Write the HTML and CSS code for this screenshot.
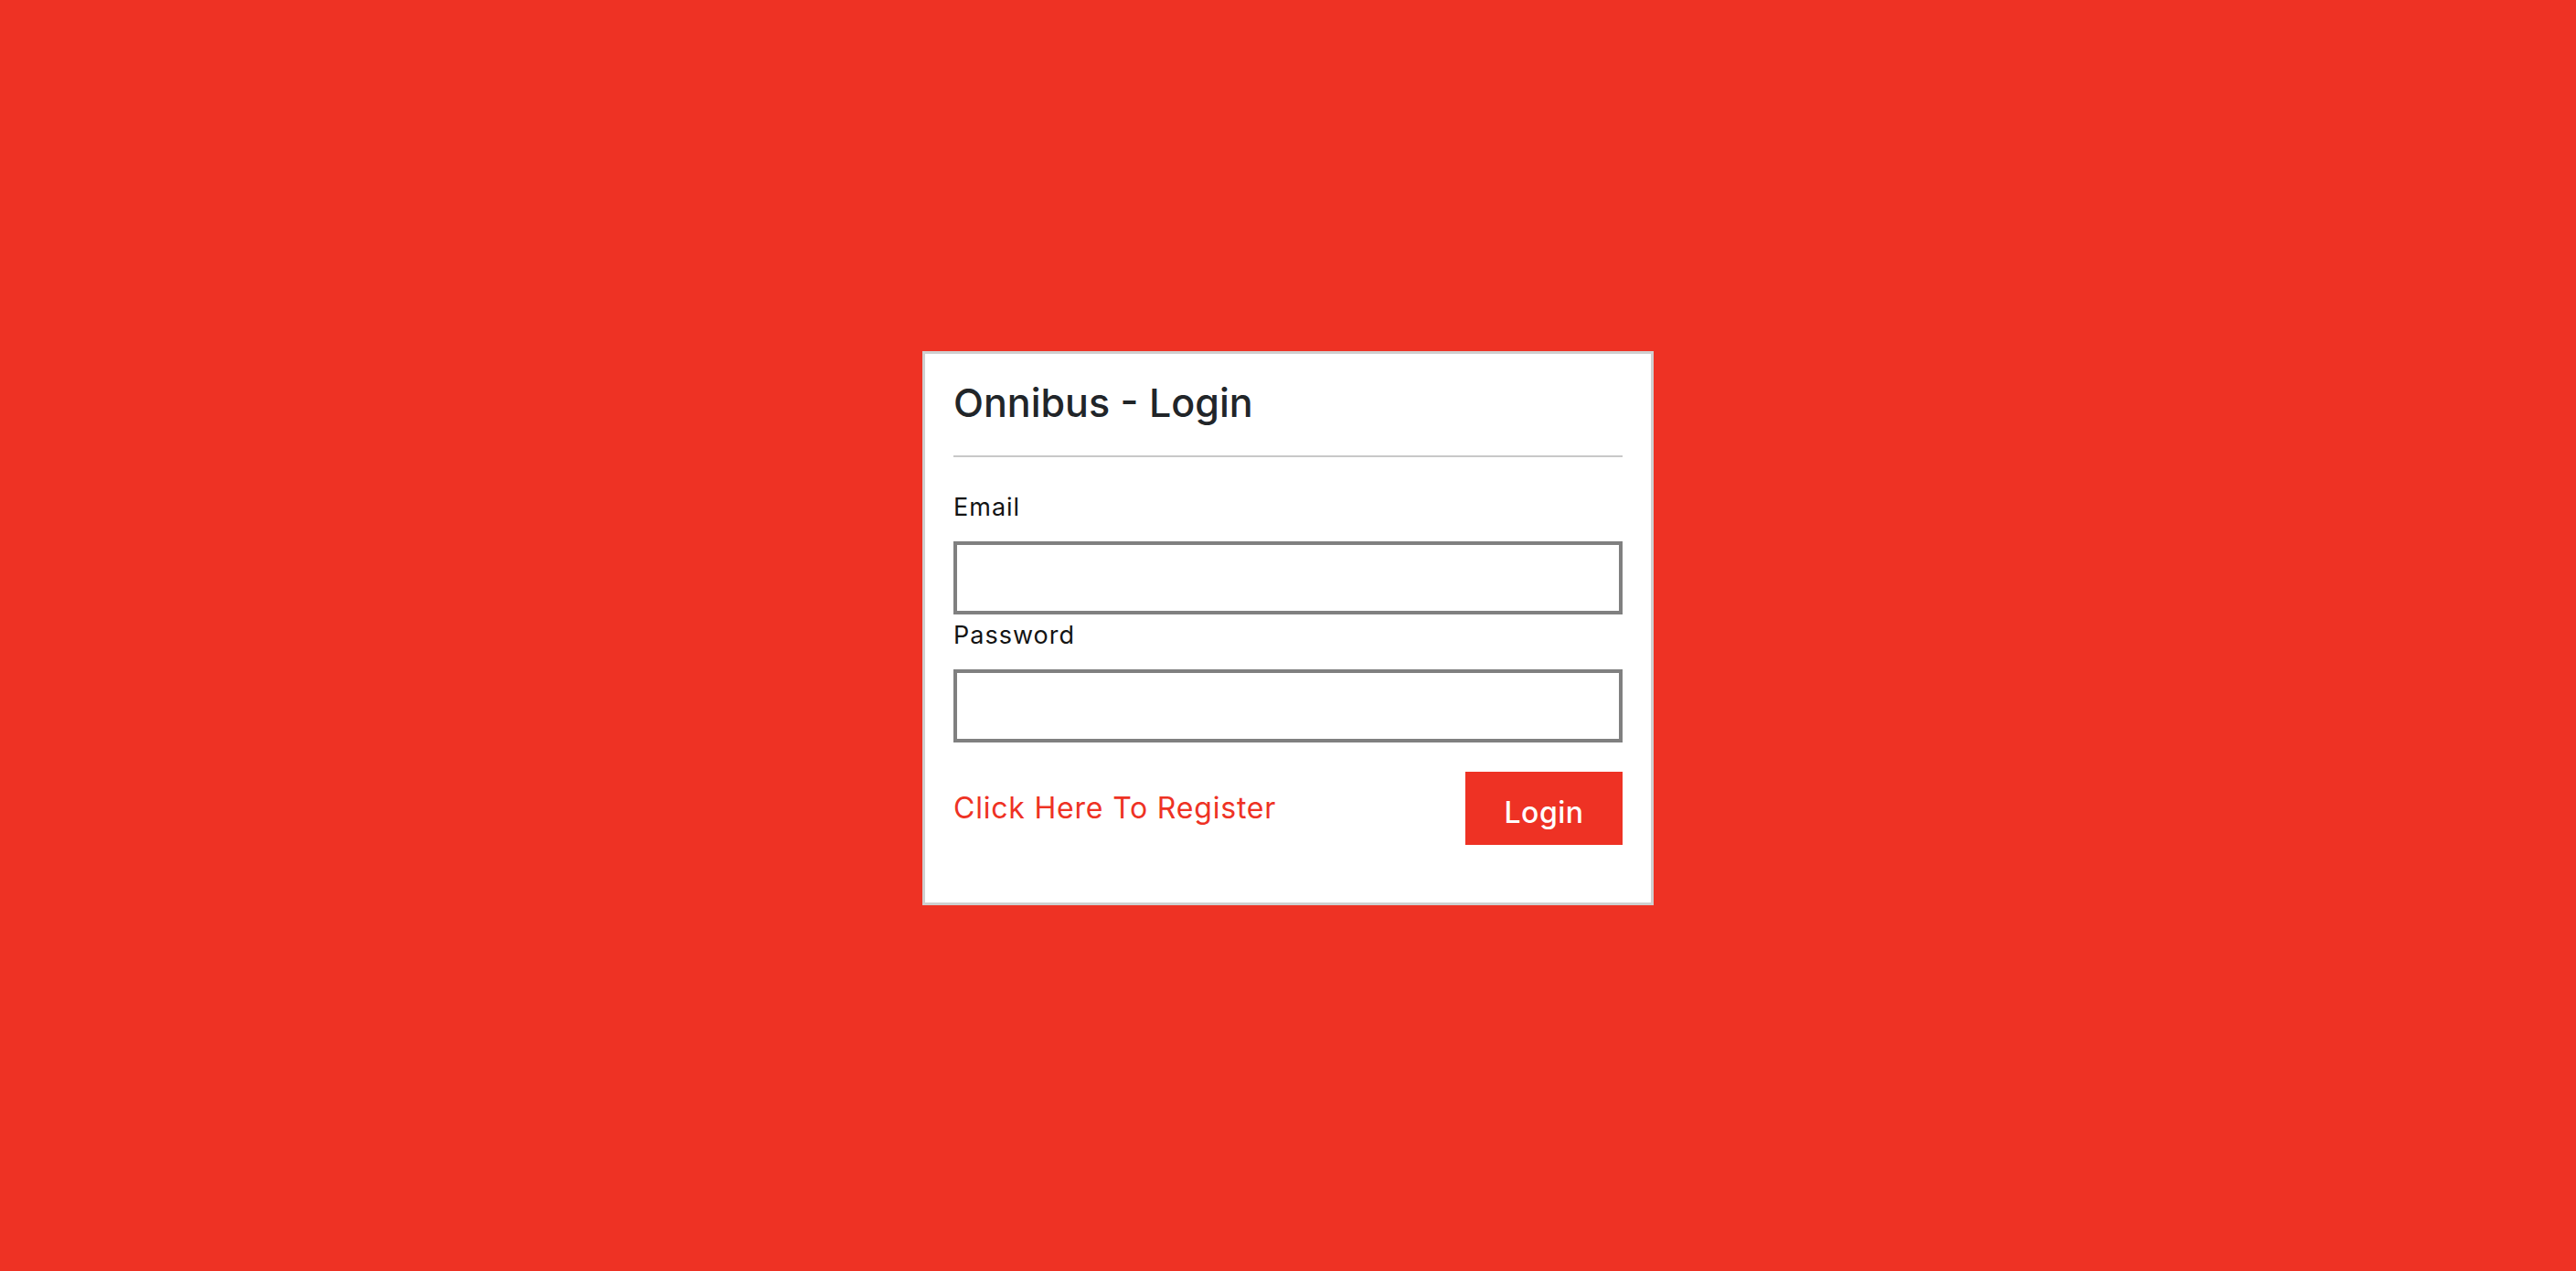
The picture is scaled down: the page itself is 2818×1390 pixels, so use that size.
FILE: index.html
```html
<!DOCTYPE html>
<html lang="en">
<head>
<meta charset="utf-8">
<title>Onnibus - Login</title>
<link rel="stylesheet" href="styles.css">
</head>
<body>
<main class="page">
  <form class="card" onsubmit="return false;">
    <h1 class="card-title">Onnibus - Login</h1>
    <hr class="divider">
    <label class="field-label" for="email">Email</label>
    <input class="field-input" id="email" type="email">
    <label class="field-label field-label--second" for="password">Password</label>
    <input class="field-input" id="password" type="password">
    <div class="actions">
      <a class="register-link" href="#">Click Here To Register</a>
      <button class="login-btn" type="submit">Login</button>
    </div>
  </form>
</main>
</body>
</html>
```
FILE: styles.css
```css
html, body {
  margin: 0;
  padding: 0;
  background: #ee3224;
}

body {
  font-family: Inter, "Open Sans", "Liberation Sans", sans-serif;
  color: #212529;
}

.page {
  min-height: 100vh;
  box-sizing: border-box;
  padding-bottom: 16px;
  display: flex;
  align-items: center;
  justify-content: center;
}

.card {
  width: 800px;
  box-sizing: border-box;
  background: #ffffff;
  border: 3px solid #cfcfcf;
  padding: 28px 31px 63px;
  display: flex;
  flex-direction: column;
}

.card-title {
  margin: 0;
  font-size: 43px;
  line-height: 1.2;
  font-weight: 500;
  color: #212529;
}

.divider {
  margin: 31px 0 35px;
  border: 0;
  border-top: 2px solid #c8c8c8;
  height: 0;
}

.field-label {
  display: block;
  font-size: 27px;
  line-height: 39px;
  letter-spacing: 1px;
  font-weight: 400;
  color: #141414;
  margin-bottom: 18px;
}

.field-label--second {
  margin-top: 3px;
}

.field-input {
  display: block;
  box-sizing: border-box;
  width: 100%;
  height: 80px;
  margin: 0;
  border: 4px solid #808080;
  border-radius: 0;
  background: #ffffff;
  outline: none;
  padding: 0 12px;
  font: inherit;
  font-size: 26px;
}

.actions {
  margin-top: 32px;
  display: flex;
  align-items: center;
  justify-content: space-between;
}

.register-link {
  font-size: 32px;
  line-height: normal;
  letter-spacing: 0.8px;
  color: #ee3224;
  text-decoration: none;
  font-weight: 400;
}

.login-btn {
  width: 172px;
  height: 80px;
  box-sizing: border-box;
  border: 0;
  border-radius: 0;
  background: #ee3224;
  color: #ffffff;
  font-family: inherit;
  font-size: 32px;
  font-weight: 500;
  letter-spacing: 0.5px;
  padding: 9px 0 0;
  display: flex;
  align-items: center;
  justify-content: center;
  cursor: pointer;
}
```
